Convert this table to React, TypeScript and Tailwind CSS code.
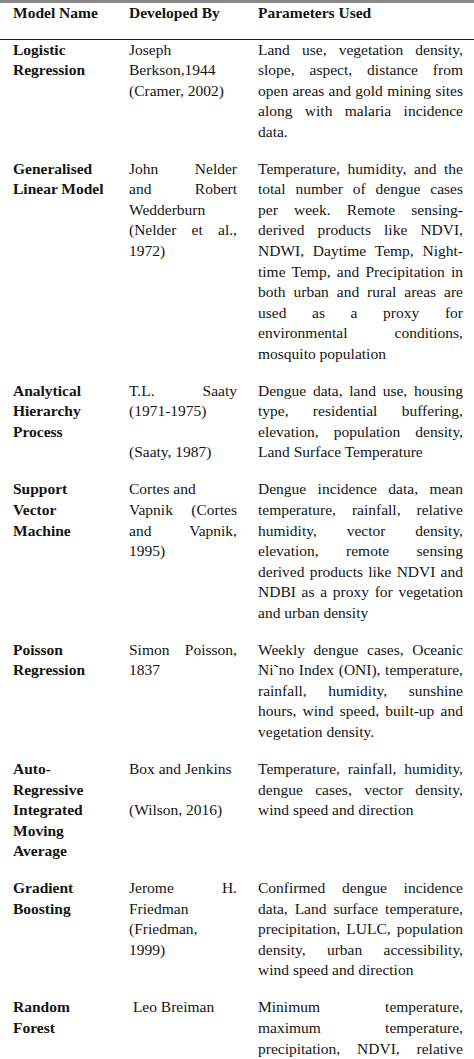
import React from 'react';

// [text, justify] — justified lines stretch to the column edge like the typeset original
type Line = [string, boolean];

interface Row {
  name: string[];
  dev: Line[];
  params: string[];
}

const rows: Row[] = [
  {
    name: ['Logistic', 'Regression'],
    dev: [['Joseph', false], ['Berkson,1944', false], ['(Cramer, 2002)', false]],
    params: [
      'Land use, vegetation density,',
      'slope, aspect, distance from',
      'open areas and gold mining sites',
      'along with malaria incidence',
      'data.',
    ],
  },
  {
    name: ['Generalised', 'Linear Model'],
    dev: [
      ['John Nelder', true],
      ['and Robert', true],
      ['Wedderburn', false],
      ['(Nelder et al.,', true],
      ['1972)', false],
    ],
    params: [
      'Temperature, humidity, and the',
      'total number of dengue cases',
      'per week. Remote sensing-',
      'derived products like NDVI,',
      'NDWI, Daytime Temp, Night-',
      'time Temp, and Precipitation in',
      'both urban and rural areas are',
      'used as a proxy for',
      'environmental conditions,',
      'mosquito population',
    ],
  },
  {
    name: ['Analytical', 'Hierarchy', 'Process'],
    dev: [['T.L. Saaty', true], ['(1971-1975)', false], ['', false], ['(Saaty, 1987)', false]],
    params: [
      'Dengue data, land use, housing',
      'type, residential buffering,',
      'elevation, population density,',
      'Land Surface Temperature',
    ],
  },
  {
    name: ['Support', 'Vector', 'Machine'],
    dev: [['Cortes and', false], ['Vapnik (Cortes', true], ['and Vapnik,', true], ['1995)', false]],
    params: [
      'Dengue incidence data, mean',
      'temperature, rainfall, relative',
      'humidity, vector density,',
      'elevation, remote sensing',
      'derived products like NDVI and',
      'NDBI as a proxy for vegetation',
      'and urban density',
    ],
  },
  {
    name: ['Poisson', 'Regression'],
    dev: [['Simon Poisson,', true], ['1837', false]],
    params: [
      'Weekly dengue cases, Oceanic',
      'Ni\u02DCno Index (ONI), temperature,',
      'rainfall, humidity, sunshine',
      'hours, wind speed, built-up and',
      'vegetation density.',
    ],
  },
  {
    name: ['Auto-', 'Regressive', 'Integrated', 'Moving', 'Average'],
    dev: [['Box and Jenkins', false], ['', false], ['(Wilson, 2016)', false]],
    params: [
      'Temperature, rainfall, humidity,',
      'dengue cases, vector density,',
      'wind speed and direction',
    ],
  },
  {
    name: ['Gradient', 'Boosting'],
    dev: [['Jerome H.', true], ['Friedman', false], ['(Friedman,', false], ['1999)', false]],
    params: [
      'Confirmed dengue incidence',
      'data, Land surface temperature,',
      'precipitation, LULC, population',
      'density, urban accessibility,',
      'wind speed and direction',
    ],
  },
  {
    name: ['Random', 'Forest'],
    dev: [['\u00A0Leo Breiman', false]],
    params: [
      'Minimum temperature,',
      'maximum temperature,',
      'precipitation, NDVI, relative',
      'humidity',
    ],
  },
];

const TextLine = ({ text, justify }: { text: string; justify: boolean }) => (
  <div
    className={
      justify
        ? 'whitespace-nowrap text-justify [text-align-last:justify]'
        : 'whitespace-nowrap text-left'
    }
  >
    {text === '' ? '\u00A0' : text}
  </div>
);

export default function App() {
  return (
    <div className="min-h-screen bg-white text-[#141414] font-['Liberation_Serif','Times_New_Roman',serif] text-[15.5px] leading-[20.55px]">
      <div className="h-[3px] bg-[#8a8a8a]" />

      {/* header */}
      <div className="grid grid-cols-[116px_129px_205px] pl-[13px] pb-[15px] border-b-[1.5px] border-[#1c1c1c] font-bold">
        <div>Model Name</div>
        <div>Developed By</div>
        <div>Parameters Used</div>
      </div>

      {/* body */}
      <div className="flex flex-col">
        {rows.map((row, i) => (
          <div key={i} className="grid grid-cols-[116px_129px_205px] pl-[13px] pb-[16.5px]">
            <div className="font-bold">
              {row.name.map((n, k) => (
                <div key={k} className="whitespace-nowrap">{n}</div>
              ))}
            </div>
            <div className="w-[108px]">
              {row.dev.map(([t, j], k) => (
                <TextLine key={k} text={t} justify={j} />
              ))}
            </div>
            <div>
              {row.params.map((p, k) => (
                <TextLine key={k} text={p} justify={k < row.params.length - 1} />
              ))}
            </div>
          </div>
        ))}
      </div>
    </div>
  );
}
